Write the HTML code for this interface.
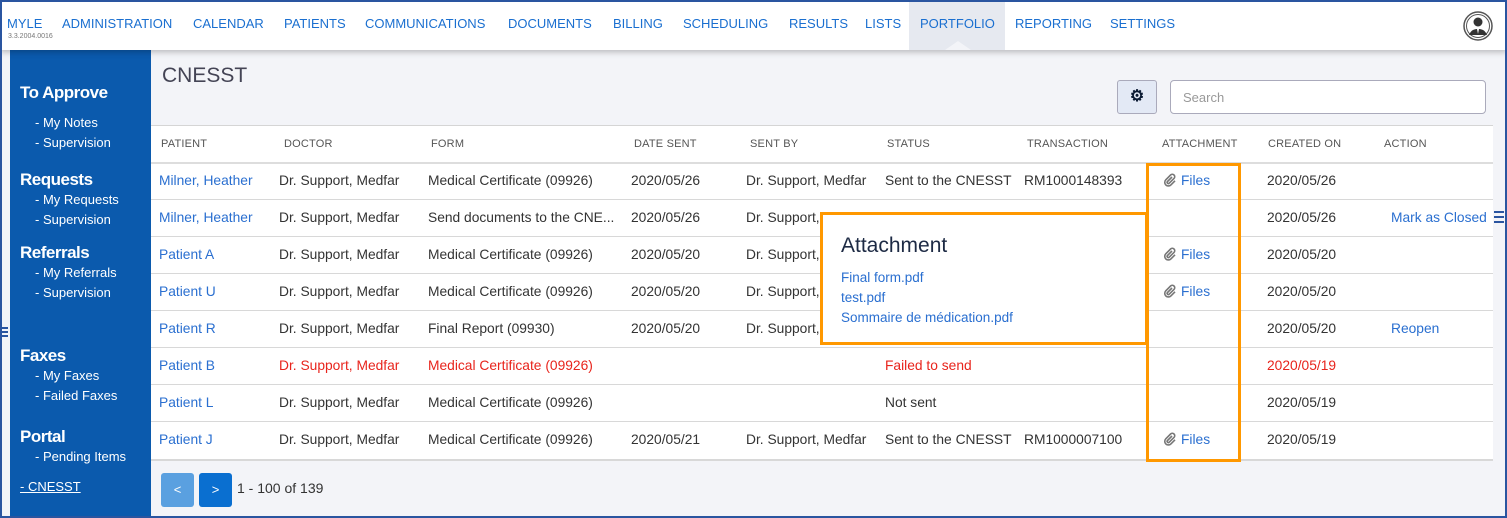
<!DOCTYPE html>
<html><head><style>
*{margin:0;padding:0;box-sizing:border-box}
body{width:1507px;height:518px;overflow:hidden;font-family:"Liberation Sans",sans-serif;background:#fff;position:relative}
.a{position:absolute;white-space:nowrap}
.frame{position:absolute;left:0;top:0;width:1507px;height:518px;border:2px solid #2a55a0;z-index:50;pointer-events:none}
.nav{position:absolute;left:0;top:0;width:1507px;height:50px;background:#fff;box-shadow:0 2px 6px rgba(0,0,0,.25);z-index:5}
.nav span{position:absolute;top:16px;font-size:13px;color:#1a6fd0}
.side{position:absolute;left:10px;top:50px;width:141px;height:468px;background:#0b5aad;color:#fff}
.side .h{position:absolute;left:10px;font-size:17px;font-weight:bold;letter-spacing:-.5px}
.side .i{position:absolute;left:25px;font-size:13px}
.main{position:absolute;left:151px;top:50px;width:1342px;height:468px;background:#f3f4f8}
.tbl{position:absolute;left:151px;top:125px;width:1342px;height:336px;background:#fff;border-top:1px solid #d5d5d5}
.row{position:absolute;left:151px;width:1342px;height:1px;background:#d8d8d8}
.th{position:absolute;top:138px;font-size:11px;color:#555;letter-spacing:.2px}
.c{position:absolute;font-size:13.8px;color:#333;white-space:nowrap}
.l{color:#2a6fd0}.r{color:#e8241c}
.clip{display:inline-block;width:14px;height:14px;vertical-align:-2px;margin-right:4px}
</style></head><body>
<div class="nav">
<span style="left:7px">MYLE</span>
<div class="a" style="left:8px;top:33px;font-size:7px;color:#777">3.3.2004.0016</div>
<span style="left:62px">ADMINISTRATION</span>
<span style="left:193px">CALENDAR</span>
<span style="left:284px">PATIENTS</span>
<span style="left:365px">COMMUNICATIONS</span>
<span style="left:508px">DOCUMENTS</span>
<span style="left:613px">BILLING</span>
<span style="left:683px">SCHEDULING</span>
<span style="left:789px">RESULTS</span>
<span style="left:865px">LISTS</span>
<div class="a" style="left:909px;top:0;width:96px;height:50px;background:#e6e9f0"></div>
<span style="left:920px">PORTFOLIO</span>
<div class="a" style="left:945px;top:41px;width:0;height:0;border-left:13px solid transparent;border-right:13px solid transparent;border-bottom:9px solid #f3f4f8"></div>
<span style="left:1015px">REPORTING</span>
<span style="left:1110px">SETTINGS</span>
<svg class="a" style="left:1463px;top:11px" width="30" height="30" viewBox="0 0 30 30"><circle cx="15" cy="15" r="14" fill="#fff" stroke="#555" stroke-width="1.5"/><circle cx="15" cy="15" r="11.5" fill="none" stroke="#555" stroke-width="1"/><circle cx="15" cy="11" r="4.5" fill="#333"/><path d="M6 24c2-5 5-6 9-6s7 1 9 6z" fill="#333"/><path d="M14 18h2l-1 5z" fill="#fff"/></svg>
</div>
<div class="a" style="left:2px;top:50px;width:8px;height:466px;background:#f3f4f8"></div>
<div class="a" style="left:2px;top:327px;width:6px;height:12px;background:repeating-linear-gradient(#2a55a0 0 2px,transparent 2px 4px)"></div>
<div class="side">
<div class="h" style="top:33px">To Approve</div>
<div class="i" style="top:65px">- My Notes</div>
<div class="i" style="top:85px">- Supervision</div>
<div class="h" style="top:120px">Requests</div>
<div class="i" style="top:142px">- My Requests</div>
<div class="i" style="top:162px">- Supervision</div>
<div class="h" style="top:193px">Referrals</div>
<div class="i" style="top:215px">- My Referrals</div>
<div class="i" style="top:235px">- Supervision</div>
<div class="h" style="top:296px">Faxes</div>
<div class="i" style="top:318px">- My Faxes</div>
<div class="i" style="top:338px">- Failed Faxes</div>
<div class="h" style="top:377px">Portal</div>
<div class="i" style="top:399px">- Pending Items</div>
<div class="a" style="left:10px;top:429px;font-size:13px;text-decoration:underline">- CNESST</div>
</div>
<div class="main"></div>
<div class="a" style="left:162px;top:64px;font-size:21px;color:#445">CNESST</div>
<div class="a" style="left:1117px;top:80px;width:40px;height:34px;background:#e3e9f5;border:1px solid #aab;border-radius:3px;text-align:center;line-height:32px;font-size:16px;color:#0b1a33;font-weight:bold">&#9881;</div>
<div class="a" style="left:1170px;top:80px;width:316px;height:34px;background:#fff;border:1px solid #aab;border-radius:4px;font-size:13px;color:#999;padding:9px 12px">Search</div>
<div class="a" style="left:1493px;top:50px;width:12px;height:466px;background:#f3f4f8"></div>
<div class="a" style="left:1494px;top:211px;width:10px;height:12px;background:repeating-linear-gradient(#2a55a0 0 2px,transparent 2px 5px)"></div>
<div class="tbl"></div>
<div class="row" style="top:162px;height:2px;background:#ddd"></div>
<div class="row" style="top:199px"></div><div class="row" style="top:236px"></div><div class="row" style="top:273px"></div><div class="row" style="top:310px"></div><div class="row" style="top:347px"></div><div class="row" style="top:384px"></div><div class="row" style="top:421px"></div><div class="row" style="top:459px;height:2px"></div>
<div class="th" style="left:161px">PATIENT</div><div class="th" style="left:284px">DOCTOR</div><div class="th" style="left:431px">FORM</div><div class="th" style="left:634px">DATE SENT</div><div class="th" style="left:750px">SENT BY</div><div class="th" style="left:887px">STATUS</div><div class="th" style="left:1027px">TRANSACTION</div><div class="th" style="left:1162px">ATTACHMENT</div><div class="th" style="left:1268px">CREATED ON</div><div class="th" style="left:1384px">ACTION</div>

<div style="position:absolute;top:173px;left:0">
<div class="c l" style="left:159px">Milner, Heather</div><div class="c" style="left:279px">Dr. Support, Medfar</div><div class="c" style="left:428px">Medical Certificate (09926)</div><div class="c" style="left:631px">2020/05/26</div><div class="c" style="left:746px">Dr. Support, Medfar</div><div class="c" style="left:885px">Sent to the CNESST</div><div class="c" style="left:1024px">RM1000148393</div><div class="c l" style="left:1163px"><svg class="clip" viewBox="0 0 14 14"><path d="M9 4L4.5 8.5a1.2 1.2 0 0 0 1.7 1.7L11 5.4a2.4 2.4 0 0 0-3.4-3.4L2.8 6.8a3.6 3.6 0 0 0 5.1 5.1L12 7.8" fill="none" stroke="#777" stroke-width="1.6"/></svg>Files</div><div class="c" style="left:1267px">2020/05/26</div>
</div>
<div style="position:absolute;top:210px;left:0">
<div class="c l" style="left:159px">Milner, Heather</div><div class="c" style="left:279px">Dr. Support, Medfar</div><div class="c" style="left:428px">Send documents to the CNE...</div><div class="c" style="left:631px">2020/05/26</div><div class="c" style="left:746px">Dr. Support,</div><div class="c" style="left:1267px">2020/05/26</div><div class="c l" style="left:1391px">Mark as Closed</div>
</div>
<div style="position:absolute;top:247px;left:0">
<div class="c l" style="left:159px">Patient A</div><div class="c" style="left:279px">Dr. Support, Medfar</div><div class="c" style="left:428px">Medical Certificate (09926)</div><div class="c" style="left:631px">2020/05/20</div><div class="c" style="left:746px">Dr. Support,</div><div class="c l" style="left:1163px"><svg class="clip" viewBox="0 0 14 14"><path d="M9 4L4.5 8.5a1.2 1.2 0 0 0 1.7 1.7L11 5.4a2.4 2.4 0 0 0-3.4-3.4L2.8 6.8a3.6 3.6 0 0 0 5.1 5.1L12 7.8" fill="none" stroke="#777" stroke-width="1.6"/></svg>Files</div><div class="c" style="left:1267px">2020/05/20</div>
</div>
<div style="position:absolute;top:284px;left:0">
<div class="c l" style="left:159px">Patient U</div><div class="c" style="left:279px">Dr. Support, Medfar</div><div class="c" style="left:428px">Medical Certificate (09926)</div><div class="c" style="left:631px">2020/05/20</div><div class="c" style="left:746px">Dr. Support,</div><div class="c l" style="left:1163px"><svg class="clip" viewBox="0 0 14 14"><path d="M9 4L4.5 8.5a1.2 1.2 0 0 0 1.7 1.7L11 5.4a2.4 2.4 0 0 0-3.4-3.4L2.8 6.8a3.6 3.6 0 0 0 5.1 5.1L12 7.8" fill="none" stroke="#777" stroke-width="1.6"/></svg>Files</div><div class="c" style="left:1267px">2020/05/20</div>
</div>
<div style="position:absolute;top:321px;left:0">
<div class="c l" style="left:159px">Patient R</div><div class="c" style="left:279px">Dr. Support, Medfar</div><div class="c" style="left:428px">Final Report (09930)</div><div class="c" style="left:631px">2020/05/20</div><div class="c" style="left:746px">Dr. Support,</div><div class="c" style="left:1267px">2020/05/20</div><div class="c l" style="left:1391px">Reopen</div>
</div>
<div style="position:absolute;top:358px;left:0">
<div class="c l" style="left:159px">Patient B</div><div class="c r" style="left:279px">Dr. Support, Medfar</div><div class="c r" style="left:428px">Medical Certificate (09926)</div><div class="c r" style="left:885px">Failed to send</div><div class="c r" style="left:1267px">2020/05/19</div>
</div>
<div style="position:absolute;top:395px;left:0">
<div class="c l" style="left:159px">Patient L</div><div class="c" style="left:279px">Dr. Support, Medfar</div><div class="c" style="left:428px">Medical Certificate (09926)</div><div class="c" style="left:885px">Not sent</div><div class="c" style="left:1267px">2020/05/19</div>
</div>
<div style="position:absolute;top:432px;left:0">
<div class="c l" style="left:159px">Patient J</div><div class="c" style="left:279px">Dr. Support, Medfar</div><div class="c" style="left:428px">Medical Certificate (09926)</div><div class="c" style="left:631px">2020/05/21</div><div class="c" style="left:746px">Dr. Support, Medfar</div><div class="c" style="left:885px">Sent to the CNESST</div><div class="c" style="left:1024px">RM1000007100</div><div class="c l" style="left:1163px"><svg class="clip" viewBox="0 0 14 14"><path d="M9 4L4.5 8.5a1.2 1.2 0 0 0 1.7 1.7L11 5.4a2.4 2.4 0 0 0-3.4-3.4L2.8 6.8a3.6 3.6 0 0 0 5.1 5.1L12 7.8" fill="none" stroke="#777" stroke-width="1.6"/></svg>Files</div><div class="c" style="left:1267px">2020/05/19</div>
</div>

<div class="a" style="left:1146px;top:163px;width:95px;height:299px;border:3px solid #ff9800"></div>
<div class="a" style="left:820px;top:212px;width:328px;height:133px;border:3px solid #ff9800;background:#fff">
<div class="a" style="left:18px;top:19px;font-size:21px;color:#1d2a44">Attachment</div>
<div class="a" style="left:18px;top:53px;font-size:13.5px;color:#2a6fd0;line-height:20px">Final form.pdf<br>test.pdf<br>Sommaire de médication.pdf</div>
</div>

<div class="a" style="left:161px;top:473px;width:33px;height:34px;background:#5aa0e0;border-radius:3px;color:#fff;text-align:center;line-height:34px;font-size:13px">&lt;</div>
<div class="a" style="left:199px;top:473px;width:33px;height:34px;background:#0a6fd0;border-radius:3px;color:#fff;text-align:center;line-height:34px;font-size:13px">&gt;</div>
<div class="a" style="left:237px;top:480px;font-size:14px;color:#333">1 - 100 of 139</div>
<div class="frame"></div>
</body></html>
